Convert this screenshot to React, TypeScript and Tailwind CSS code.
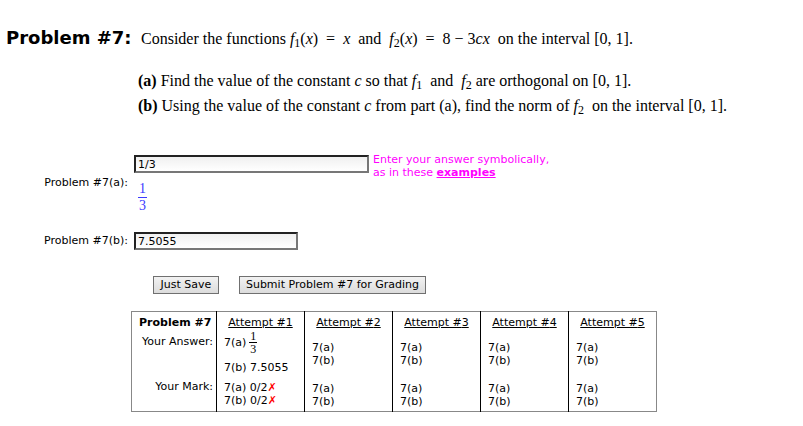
import React from "react";

const Frac: React.FC<{ n: string; d: string; className?: string }> = ({ n, d, className }) => (
  <span className={`inline-flex flex-col items-center align-middle font-['Liberation_Serif',serif] ${className ?? ""}`}>
    <span className="leading-none px-[1px]">{n}</span>
    <span className="w-full border-t border-current" />
    <span className="leading-none px-[1px]">{d}</span>
  </span>
);

const inputCls =
  "h-[18px] border-2 border-t-[#222] border-l-[#222] border-b-[#777] border-r-[#777] bg-gradient-to-b from-[#f0f0f0] to-white px-[2px] text-[11px] leading-[14px] font-['DejaVu_Sans',sans-serif] text-black outline-none";

const btnCls =
  "h-[18px] border border-[#707070] bg-gradient-to-b from-[#f2f2f2] to-[#dcdcdc] text-[11px] leading-[14px] text-black text-center";

const attempts = [1, 2, 3, 4, 5];

export default function App() {
  return (
    <div className="w-[803px] h-[426px] bg-white text-black font-['DejaVu_Sans',sans-serif] text-[11px] overflow-hidden">
      {/* Title */}
      <div className="flex items-baseline pl-[6px] pt-[27px]">
        <span className="font-bold text-[18px] w-[135px] leading-[22px]">Problem #7:</span>
        <span className="font-['Liberation_Serif',serif] text-[16px] leading-[22px]">
          Consider the functions <i>f</i>
          <sub>1</sub>(<i>x</i>)&nbsp; = &nbsp;<i>x</i>&nbsp; and&nbsp; <i>f</i>
          <sub>2</sub>(<i>x</i>)&nbsp; = &nbsp;8 − 3<i>cx</i>&nbsp; on the interval [0, 1].
        </span>
      </div>

      {/* Parts */}
      <div className="pl-[138px] pt-[18px] font-['Liberation_Serif',serif] text-[16px] leading-[25px]">
        <div>
          <b>(a)</b> Find the value of the constant <i>c</i> so that <i>f</i>
          <sub>1</sub>&nbsp; and&nbsp; <i>f</i>
          <sub>2</sub> are orthogonal on [0, 1].
        </div>
        <div>
          <b>(b)</b> Using the value of the constant <i>c</i> from part (a), find the norm of <i>f</i>
          <sub>2</sub>&nbsp; on the interval [0, 1].
        </div>
      </div>

      {/* Answers */}
      <div className="grid grid-cols-[128px_1fr] gap-x-[6px] items-center pt-[35px]">
        <div className="text-right">Problem #7(a):</div>
        <div className="flex flex-col items-start">
          <div className="flex items-start">
            <input readOnly value="1/3" className={`${inputCls} w-[235px] mt-[2px]`} />
            <div className="ml-[4px] text-[#ff00ff] leading-[13px]">
              Enter your answer symbolically,
              <br />
              as in these <a className="font-bold underline">examples</a>
            </div>
          </div>
          <Frac n="1" d="3" className="text-[#3b3bff] text-[14px] mt-[3px] ml-[4px] gap-[1px]" />
        </div>

        <div className="text-right mt-[19px]">Problem #7(b):</div>
        <div className="mt-[19px]">
          <input readOnly value="7.5055" className={`${inputCls} w-[164px]`} />
        </div>
      </div>

      {/* Buttons */}
      <div className="flex pl-[153px] pt-[26px] gap-[20px]">
        <button className={`${btnCls} w-[66px]`}>Just Save</button>
        <button className={`${btnCls} w-[187px]`}>Submit Problem #7 for Grading</button>
      </div>

      {/* Attempts table */}
      <table className="ml-[131px] mt-[17px] w-[524px] border border-[#888] border-collapse table-fixed leading-[13px]">
        <colgroup>
          <col className="w-[85px]" />
          {attempts.map((a) => (
            <col key={a} className="w-[88px]" />
          ))}
        </colgroup>
        <thead>
          <tr>
            <th className="text-left font-bold pl-[7px] pt-[4px] pb-[4px] border-r border-black">Problem #7</th>
            {attempts.map((a) => (
              <th key={a} className="font-normal text-center underline pt-[4px] pb-[4px] border-r border-black last:border-r-0">
                Attempt #{a}
              </th>
            ))}
          </tr>
        </thead>
        <tbody>
          <tr>
            <td className="text-right align-top pr-[3px] pt-[2px] border-r border-black">Your Answer:</td>
            <td className="pl-[7px] border-r border-black align-top">
              <div className="flex items-center gap-[3px] h-[19px]">
                7(a) <Frac n="1" d="3" className="text-[12px]" />
              </div>
              <div className="pt-[9px] pb-[4px]">7(b) 7.5055</div>
            </td>
            {attempts.slice(1).map((a) => (
              <td key={a} className="pl-[7px] align-middle border-r border-black last:border-r-0 pb-[3px]">
                7(a)
                <br />
                7(b)
              </td>
            ))}
          </tr>
          <tr>
            <td className="text-right align-top pr-[3px] pt-[2px] border-r border-black">Your Mark:</td>
            <td className="pl-[7px] border-r border-black pt-[2px] pb-[3px]">
              7(a) 0/2<span className="text-[#ff0000]">✗</span>
              <br />
              7(b) 0/2<span className="text-[#ff0000]">✗</span>
            </td>
            {attempts.slice(1).map((a) => (
              <td key={a} className="pl-[7px] border-r border-black last:border-r-0 pt-[4px] pb-[3px]">
                7(a)
                <br />
                7(b)
              </td>
            ))}
          </tr>
        </tbody>
      </table>
    </div>
  );
}
